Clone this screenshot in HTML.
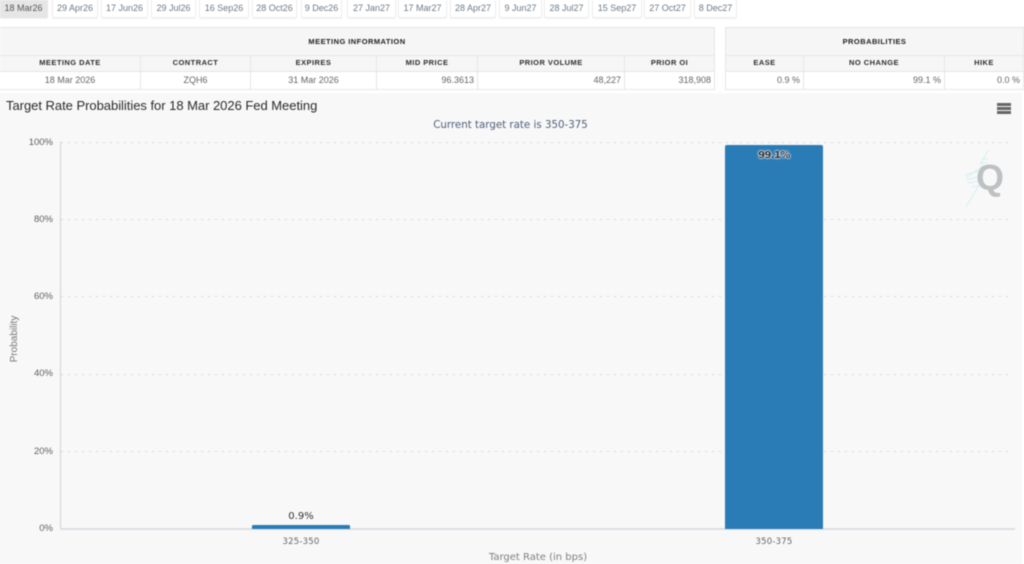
<!DOCTYPE html>
<html><head><meta charset="utf-8">
<style>
html,body{margin:0;padding:0;background:#fff;}
#p{position:relative;width:1024px;height:564px;overflow:hidden;background:#fff;font-family:"Liberation Sans",sans-serif;filter:blur(.5px);}
#p div{position:absolute;box-sizing:border-box;white-space:nowrap;}
.t{top:-2px;height:20px;border:1px solid #eee;border-radius:2px;background:#fff;color:#6d7a84;font-size:9px;line-height:19px;text-align:center;box-shadow:0 1px 1px #f2f2f2;}
.c{border:1px solid #e6e6e6;text-align:center;color:#333;}
.h1{background:#f6f6f6;font-size:7.5px;font-weight:bold;letter-spacing:.45px;line-height:27px;color:#222;}
.h2{background:#f6f6f6;font-size:7.5px;font-weight:bold;letter-spacing:.45px;line-height:14px;color:#2e2e2e;}
.d{background:#fff;font-size:9px;line-height:17px;color:#666;}
.r{text-align:right;padding-right:3px;}
.y{width:50px;left:3px;text-align:right;font-size:9.5px;color:#5e5e5e;line-height:12px;}
.g{left:61px;width:950px;height:1px;background:repeating-linear-gradient(90deg,#d8d8d8 0 2px,transparent 2px 7px);}
</style></head><body><div id="p">
<div class="t" style="left:-1px;width:49px;background:#e6e6e6;color:#555;border-color:#e6e6e6">18 Mar26</div>
<div class="t" style="left:52px;width:46px">29 Apr26</div>
<div class="t" style="left:101px;width:47px">17 Jun26</div>
<div class="t" style="left:151px;width:45px">29 Jul26</div>
<div class="t" style="left:199px;width:50px">16 Sep26</div>
<div class="t" style="left:252px;width:45px">28 Oct26</div>
<div class="t" style="left:301px;width:41px">9 Dec26</div>
<div class="t" style="left:347px;width:49px">27 Jan27</div>
<div class="t" style="left:398px;width:49px">17 Mar27</div>
<div class="t" style="left:450px;width:46px">28 Apr27</div>
<div class="t" style="left:499px;width:43px">9 Jun27</div>
<div class="t" style="left:544px;width:45px">28 Jul27</div>
<div class="t" style="left:592px;width:50px">15 Sep27</div>
<div class="t" style="left:644px;width:47px">27 Oct27</div>
<div class="t" style="left:694px;width:43px">8 Dec27</div>

<div class="c h1" style="left:-1px;top:27px;width:716px;height:29px">MEETING INFORMATION</div>
<div class="c h2" style="left:-1px;top:55px;width:142px;height:17px">MEETING DATE</div>
<div class="c h2" style="left:140px;top:55px;width:111px;height:17px">CONTRACT</div>
<div class="c h2" style="left:250px;top:55px;width:127px;height:17px">EXPIRES</div>
<div class="c h2" style="left:376px;top:55px;width:102px;height:17px">MID PRICE</div>
<div class="c h2" style="left:477px;top:55px;width:148px;height:17px">PRIOR VOLUME</div>
<div class="c h2" style="left:624px;top:55px;width:91px;height:17px">PRIOR OI</div>
<div class="c d" style="left:-1px;top:71px;width:142px;height:19px">18 Mar 2026</div>
<div class="c d" style="left:140px;top:71px;width:111px;height:19px">ZQH6</div>
<div class="c d" style="left:250px;top:71px;width:127px;height:19px">31 Mar 2026</div>
<div class="c d r" style="left:376px;top:71px;width:102px;height:19px">96.3613</div>
<div class="c d r" style="left:477px;top:71px;width:148px;height:19px">48,227</div>
<div class="c d r" style="left:624px;top:71px;width:91px;height:19px">318,908</div>

<div class="c h1" style="left:725px;top:27px;width:299px;height:29px">PROBABILITIES</div>
<div class="c h2" style="left:725px;top:55px;width:79px;height:17px">EASE</div>
<div class="c h2" style="left:803px;top:55px;width:142px;height:17px">NO CHANGE</div>
<div class="c h2" style="left:944px;top:55px;width:80px;height:17px">HIKE</div>
<div class="c d r" style="left:725px;top:71px;width:79px;height:19px">0.9 %</div>
<div class="c d r" style="left:803px;top:71px;width:142px;height:19px">99.1 %</div>
<div class="c d r" style="left:944px;top:71px;width:80px;height:19px">0.0 %</div>

<div style="left:0;top:93px;width:1022px;height:471px;background:#f8f8f8"></div>
<div style="left:6px;top:97px;font-size:13px;line-height:18px;color:#2a2a2a;letter-spacing:-.03px">Target Rate Probabilities for 18 Mar 2026 Fed Meeting</div>
<div style="left:0;top:118px;width:1021px;text-align:center;font-family:'DejaVu Sans',sans-serif;font-size:10.25px;line-height:14px;color:#4d5f7c">Current target rate is 350-375</div>
<div style="left:997px;top:103px;width:14px;height:2.5px;background:#666"></div>
<div style="left:997px;top:107px;width:14px;height:2.5px;background:#666"></div>
<div style="left:997px;top:111px;width:14px;height:2.5px;background:#666"></div>

<div class="g" style="top:142px"></div>
<div class="g" style="top:219px"></div>
<div class="g" style="top:296px"></div>
<div class="g" style="top:374px"></div>
<div class="g" style="top:451px"></div>
<div style="left:60px;top:142px;width:1px;height:388px;background:#d0d3d8"></div>
<div style="left:60px;top:528px;width:955px;height:2px;background:#dcdfe3"></div>
<div class="y" style="top:137px">100%</div>
<div class="y" style="top:214px">80%</div>
<div class="y" style="top:291px">60%</div>
<div class="y" style="top:368px">40%</div>
<div class="y" style="top:446px">20%</div>
<div class="y" style="top:523px">0%</div>
<div style="left:-15px;top:333px;width:60px;text-align:center;font-size:10px;line-height:12px;color:#777;transform:rotate(-90deg)">Probability</div>

<div style="left:252px;top:525px;width:98px;height:4px;background:#2a7cb6;border-radius:1px 1px 0 0"></div>
<div style="left:725px;top:145px;width:98px;height:384px;background:#2a7cb6;border-radius:2px 2px 0 0"></div>
<div style="left:251px;top:510px;width:100px;text-align:center;font-family:'DejaVu Sans',sans-serif;font-size:10px;line-height:13px;color:#333">0.9%</div>
<div style="left:724px;top:149px;width:100px;text-align:center;font-family:'DejaVu Sans',sans-serif;font-size:10px;font-weight:bold;letter-spacing:-.6px;line-height:13px;color:#333;text-shadow:0 0 1px #fff,0 0 2px #fff,0 0 2px #fff">99.1%</div>
<div style="left:251px;top:536px;width:100px;text-align:center;font-family:'DejaVu Sans',sans-serif;font-size:8.5px;line-height:12px;color:#666;letter-spacing:.2px">325-350</div>
<div style="left:724px;top:536px;width:100px;text-align:center;font-family:'DejaVu Sans',sans-serif;font-size:8.5px;line-height:12px;color:#666;letter-spacing:.2px">350-375</div>
<div style="left:0;top:551px;width:1076px;text-align:center;font-family:'DejaVu Sans',sans-serif;font-size:10px;line-height:14px;color:#808080">Target Rate (in bps)</div>

<svg style="position:absolute;left:960px;top:145px" width="50" height="65" viewBox="0 0 50 65">
<g stroke="#d6eff3" stroke-width="1" fill="none">
<path d="M28 5 L20 20 M24 20 L6 33 M22 25 L5 30 M24 30 L6 35 M24 35 L8 38 M24 40 L12 42 M18 42 L6 62"/>
<path d="M22 14 L28 14 M20 18 L28 18"/>
</g>
<text x="16" y="45" font-family="Liberation Sans, sans-serif" font-size="36" font-weight="bold" fill="#bdc1c3">Q</text>
</svg>
</div></body></html>
